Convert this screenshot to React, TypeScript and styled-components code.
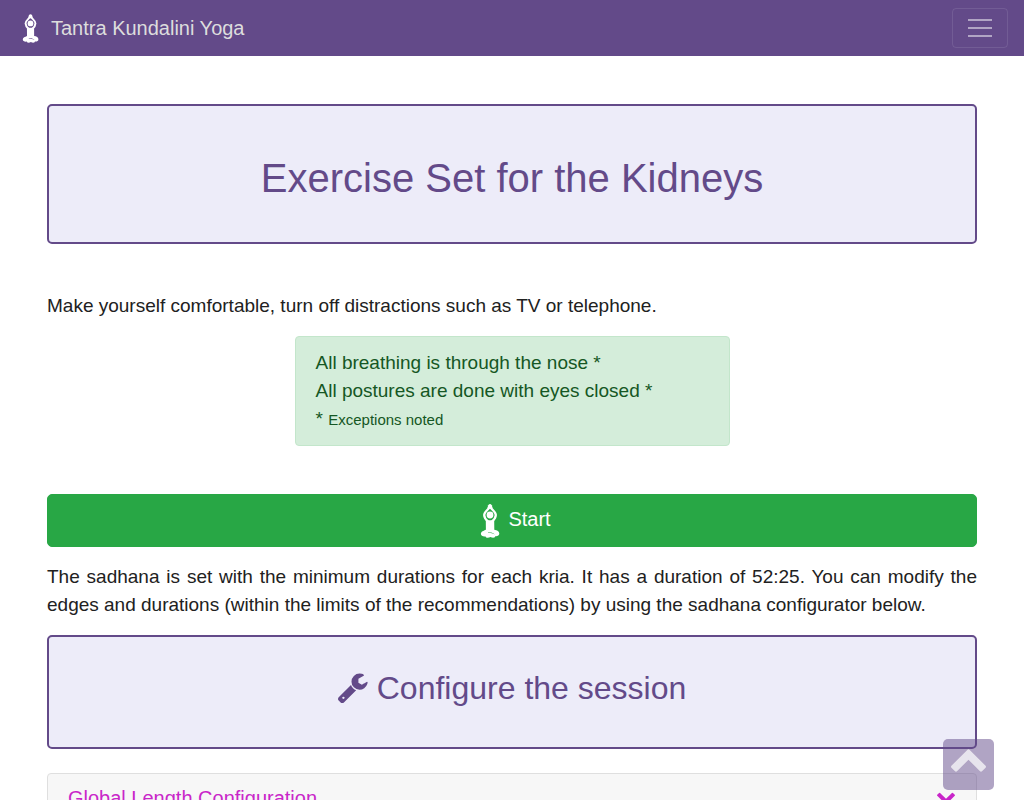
import React from 'react';
import styled, { createGlobalStyle } from 'styled-components';

const purple = '#634a89';
const lavender = '#edecf9';

const GlobalStyle = createGlobalStyle`
  *, *::before, *::after { box-sizing: border-box; }
  body {
    margin: 0;
    background: #fff;
    color: #212121;
    font-family: "Liberation Sans", Arial, sans-serif;
    font-size: 19px;
    line-height: 28px;
  }
`;

const Navbar = styled.nav`
  display: flex;
  align-items: center;
  justify-content: space-between;
  padding: 8px 16px;
  background: ${purple};
`;

const Brand = styled.a`
  display: flex;
  align-items: center;
  gap: 12px;
  padding-left: 6px;
  color: #ddd;
  font-size: 20px;
  line-height: 30px;
  text-decoration: none;
`;

const Toggler = styled.button`
  display: flex;
  align-items: center;
  justify-content: center;
  width: 56px;
  height: 40px;
  padding: 0;
  border: 1px solid rgba(255, 255, 255, 0.1);
  border-radius: 4px;
  background: transparent;
  cursor: pointer;
`;

const Container = styled.main`
  max-width: 960px;
  margin: 0 auto;
  padding: 48px 15px;
`;

const Banner = styled.header<{ $compact?: boolean }>`
  margin-bottom: ${(p) => (p.$compact ? 24 : 48)}px;
  padding: ${(p) => (p.$compact ? 32 : 48)}px 16px 40px;
  border: 2px solid ${purple};
  border-radius: 5px;
  background: ${lavender};
  color: ${purple};
  text-align: center;
`;

const Title = styled.h1`
  margin: 0;
  font-size: 40px;
  font-weight: 400;
  line-height: 48px;
`;

const Subtitle = styled.h2`
  display: flex;
  align-items: center;
  justify-content: center;
  gap: 9px;
  margin: 0;
  font-size: 32px;
  font-weight: 400;
  line-height: 38px;
`;

const Paragraph = styled.p`
  margin: 0 0 16px;
  text-align: justify;
`;

const Notice = styled.div`
  width: 435px;
  max-width: 100%;
  margin: 0 auto 48px;
  padding: 12px 20px;
  border: 1px solid #c3e6cb;
  border-radius: 4px;
  background: #d4edda;
  color: #155724;

  small {
    font-size: 15px;
    line-height: 16px;
  }
`;

const StartButton = styled.button`
  display: flex;
  align-items: center;
  justify-content: center;
  gap: 8px;
  width: 100%;
  margin-bottom: 16px;
  padding: 9px 16px 8px 23px;
  border: 1px solid #28a745;
  border-radius: 5px;
  background: #28a745;
  color: #fff;
  font-family: inherit;
  font-size: 20px;
  line-height: 30px;
  cursor: pointer;

  span { padding-bottom: 4px; }
`;

const Card = styled.section`
  border: 1px solid #dfdfdf;
  border-radius: 4px;
  background: #f7f7f7;
`;

const CardToggle = styled.button`
  display: flex;
  align-items: center;
  justify-content: space-between;
  width: 100%;
  padding: 12px 20px;
  border: 0;
  background: transparent;
  color: #c926c9;
  font-family: inherit;
  font-size: 20px;
  line-height: 24px;
  text-align: left;
  cursor: pointer;
`;

const ToTop = styled.a`
  position: fixed;
  right: 30px;
  bottom: 10px;
  display: flex;
  align-items: center;
  justify-content: center;
  width: 51px;
  height: 51px;
  padding-bottom: 8px;
  border-radius: 5px;
  background: ${purple};
  color: #fff;
  opacity: 0.5;

  svg { opacity: 0.7; }
`;

function YogaIcon({ width, height }: { width: number; height: number }) {
  return (
    <svg width={width} height={height} viewBox="0 0 20 34" aria-hidden="true">
      <path
        d="M10 2.600C8.600 5.400 4.200 7.600 4.200 11c0 2.400 1.600 4.600 3.800 6.600M10 2.600c1.400 2.800 5.800 5 5.800 8.400 0 2.400-1.600 4.600-3.800 6.600"
        fill="none"
        stroke="#fff"
        strokeWidth="2.300"
        strokeLinecap="round"
      />
      <path d="M8.200 1.200Q10-1 11.800 1.200L12.600 4 10 5 7.400 4Z" fill="#fff" />
      <circle cx="10" cy="11" r="3.400" fill="#fff" />
      <path
        fillRule="evenodd"
        d="M5.800 16.200h8.400l.1 9.600c2.600.3 5.200 1.600 5 4-.1 1.800-1.900 2.700-4 2.400l-.8 1.300c-1.500.4-2.900 0-4-.5-1.500.8-3.500 1-4.600.2l-.3-.8c-2.600.3-4.600-.4-4.700-2.400-.1-2.400 2.800-3.200 5-4.200ZM8 28.600c2.800-.4 5 0 6.800 1.800-2-1-4.300-1.400-6.800-1.300Z"
        fill="#fff"
      />
    </svg>
  );
}

function WrenchIcon() {
  return (
    <svg width="30" height="30" viewBox="0 0 1664 1664" fill="currentColor" aria-hidden="true">
      <path
        transform="translate(-20 1440) scale(1 -1)"
        fillRule="evenodd"
        d="M384 64q0 26 -19 45t-45 19t-45 -19t-19 -45t19 -45t45 -19t45 19t19 45zM1028 484l-682 -682q-37 -37 -90 -37q-52 0 -91 37l-106 108q-38 36 -38 90q0 53 38 91l681 681q39 -98 114.500 -173.500t173.500 -114.500zM1662 919q0 -39 -23 -106q-47 -134 -164.500 -217.500t-258.500 -83.500q-185 0 -316.500 131.500t-131.500 316.500t131.500 316.500t316.500 131.500q58 0 121.500 -16.500t107.500 -46.500q16 -11 16 -28t-16 -28l-293 -169v-224l193 -107q5 3 79 48.500t135.500 81t70.500 35.500q15 0 23.500 -10t8.500 -25z"
      />
    </svg>
  );
}

function ChevronIcon({ width, height, up }: { width: number; height: number; up?: boolean }) {
  return (
    <svg width={width} height={height} viewBox="0 0 1792 1152" fill="currentColor" aria-hidden="true">
      <path
        transform={up ? 'translate(0 90)' : 'translate(0 1061) scale(1 -1)'}
        d="M1683 728l-742 -741q-19 -19 -45 -19t-45 19l-742 741q-19 19 -19 45.500t19 45.500l166 165q19 19 45 19t45 -19l531 -531l531 531q19 19 45 19t45 -19l166 -165q19 -19 19 -45.500t-19 -45.500z"
      />
    </svg>
  );
}

export default function App() {
  return (
    <>
      <GlobalStyle />
      <Navbar>
        <Brand href="#">
          <YogaIcon width={17} height={29} />
          Tantra Kundalini Yoga
        </Brand>
        <Toggler type="button" aria-label="Toggle navigation">
          <svg width="30" height="30" viewBox="0 0 30 30" aria-hidden="true">
            <path
              d="M3 7h24M3 15h24M3 23h24"
              stroke="rgba(255,255,255,0.5)"
              strokeWidth="2"
            />
          </svg>
        </Toggler>
      </Navbar>
      <Container>
        <Banner>
          <Title>Exercise Set for the Kidneys</Title>
        </Banner>
        <Paragraph>
          Make yourself comfortable, turn off distractions such as TV or telephone.
        </Paragraph>
        <Notice>
          All breathing is through the nose *<br />
          All postures are done with eyes closed *<br />
          * <small>Exceptions noted</small>
        </Notice>
        <StartButton type="button">
          <YogaIcon width={20} height={34} />
          <span>Start</span>
        </StartButton>
        <Paragraph>
          The sadhana is set with the minimum durations for each kria. It has a duration of 52:25.
          You can modify the edges and durations (within the limits of the recommendations) by
          using the sadhana configurator below.
        </Paragraph>
        <Banner $compact>
          <Subtitle>
            <WrenchIcon />
            Configure the session
          </Subtitle>
        </Banner>
        <Card>
          <CardToggle type="button" aria-expanded="false">
            Global Length Configuration
            <ChevronIcon width={20} height={13} />
          </CardToggle>
        </Card>
      </Container>
      <ToTop href="#" aria-label="Back to top">
        <ChevronIcon width={39} height={25} up />
      </ToTop>
    </>
  );
}
